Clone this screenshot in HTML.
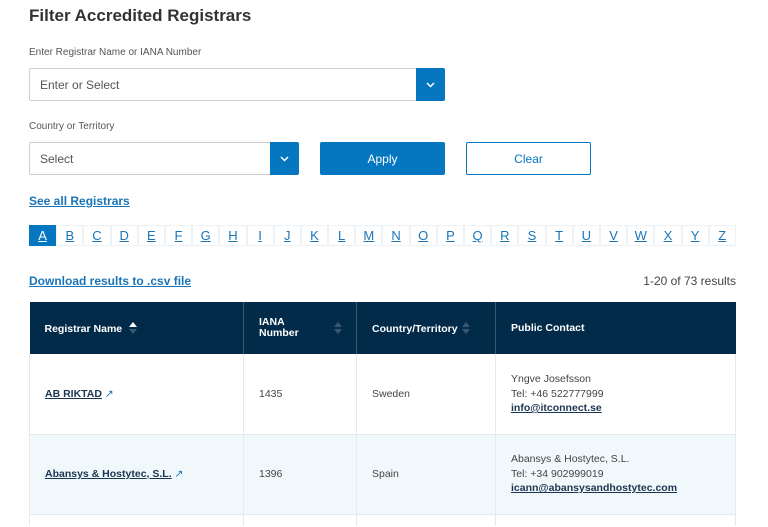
<!DOCTYPE html>
<html><head><meta charset="utf-8"><style>
*{box-sizing:border-box;margin:0;padding:0}
html,body{width:768px;height:527px;overflow:hidden}
body{background:#fff;font-family:"Liberation Sans",sans-serif;color:#333;position:relative}
.a{position:absolute}
h1{position:absolute;left:29px;top:6px;font-size:17px;font-weight:bold;color:#333}
.lbl{font-size:10px;color:#555}
.inp{border:1px solid #cfcfcf;border-radius:2px;background:#fff;font-size:12px;color:#555;padding-left:10px;display:flex;align-items:center}
.dd{position:absolute;top:-1px;right:-1px;bottom:-1px;width:29px;background:#0577c0;border-radius:0 2px 2px 0}
.dd svg{position:absolute;left:10px;top:14px}
.btn{font-size:12px;display:flex;align-items:center;justify-content:center;border-radius:2px}
a{color:#1a75b8;font-weight:bold;text-decoration:underline}
.letters{position:absolute;left:29px;top:225px;display:flex}
.letters span{width:27.2px;height:21px;border:1px solid #eef2f5;display:flex;align-items:center;justify-content:center;font-size:13px;color:#1a75b8;text-decoration:underline}
.letters span.on{background:#0577c0;color:#fff;border-color:#0577c0}
table{position:absolute;left:29px;top:302px;width:707px;border-collapse:collapse;font-size:11px}
th{background:#022b4a;color:#fff;text-align:left;font-weight:bold;height:52px;padding-left:15px;border-right:1px solid #3a5670;font-size:10.5px;line-height:11px;position:relative;vertical-align:middle}
td{height:80px;padding-left:15px;border-right:1px solid #e6eaee;border-bottom:1px solid #e6eaee;color:#444;font-size:10.5px}
td:first-child{border-left:1px solid #e6eaee}
tr.alt td{background:#f1f8fc}
tr.last td{height:12px;border-bottom:none}
td a{color:#1c3550;font-size:10.5px}
</style></head><body>
<h1>Filter Accredited Registrars</h1>
<div class="a lbl" style="left:29px;top:47px">Enter Registrar Name or IANA Number</div>
<div class="a inp" style="left:29px;top:68px;width:416px;height:33px">Enter or Select<div class="dd"><svg width="9" height="6" viewBox="0 0 9 6"><path d="M1 1l3.5 3.5L8 1" stroke="#fff" stroke-width="1.5" fill="none"/></svg></div></div>
<div class="a lbl" style="left:29px;top:121px">Country or Territory</div>
<div class="a inp" style="left:29px;top:142px;width:270px;height:33px">Select<div class="dd"><svg width="9" height="6" viewBox="0 0 9 6"><path d="M1 1l3.5 3.5L8 1" stroke="#fff" stroke-width="1.5" fill="none"/></svg></div></div>
<div class="a btn" style="left:320px;top:142px;width:125px;height:33px;background:#0577c0;color:#fff">Apply</div>
<div class="a btn" style="left:466px;top:142px;width:125px;height:33px;border:1px solid #0577c0;color:#0577c0">Clear</div>
<a class="a" style="left:29px;top:194px;font-size:12px">See all Registrars</a>
<div class="letters"><span class="on">A</span><span>B</span><span>C</span><span>D</span><span>E</span><span>F</span><span>G</span><span>H</span><span>I</span><span>J</span><span>K</span><span>L</span><span>M</span><span>N</span><span>O</span><span>P</span><span>Q</span><span>R</span><span>S</span><span>T</span><span>U</span><span>V</span><span>W</span><span>X</span><span>Y</span><span>Z</span></div>
<a class="a" style="left:29px;top:274px;font-size:12px">Download results to .csv file</a>
<div class="a" style="right:32px;top:274px;font-size:12px;color:#444">1-20 of 73 results</div>
<table>
<tr><th style="width:214px">Registrar Name <svg style="margin-left:4px;vertical-align:-3px" width="8" height="14" viewBox="0 0 8 14"><path d="M0 6L4 1 8 6z" fill="#fff"/><path d="M0 8l4 5 4-5z" fill="#3b5870"/></svg></th>
<th style="width:113px">IANA<br>Number<svg style="position:absolute;right:14px;top:19px" width="8" height="14" viewBox="0 0 8 14"><path d="M0 6L4 1 8 6z" fill="#3b5870"/><path d="M0 8l4 5 4-5z" fill="#3b5870"/></svg></th>
<th style="width:139px">Country/Territory <svg style="margin-left:2px;vertical-align:-3px" width="8" height="14" viewBox="0 0 8 14"><path d="M0 6L4 1 8 6z" fill="#3b5870"/><path d="M0 8l4 5 4-5z" fill="#3b5870"/></svg></th>
<th style="border-right:none">Public Contact</th></tr>
<tr><td><a>AB RIKTAD</a> <span style="color:#1a75b8">↗</span></td><td>1435</td><td>Sweden</td><td style="line-height:14.5px">Yngve Josefsson<br>Tel: +46 522777999<br><a>info@itconnect.se</a></td></tr>
<tr class="alt"><td><a>Abansys &amp; Hostytec, S.L.</a> <span style="color:#1a75b8">↗</span></td><td>1396</td><td>Spain</td><td style="line-height:14.5px">Abansys &amp; Hostytec, S.L.<br>Tel: +34 902999019<br><a>icann@abansysandhostytec.com</a></td></tr>
<tr class="last"><td></td><td></td><td></td><td></td></tr>
</table>
</body></html>
